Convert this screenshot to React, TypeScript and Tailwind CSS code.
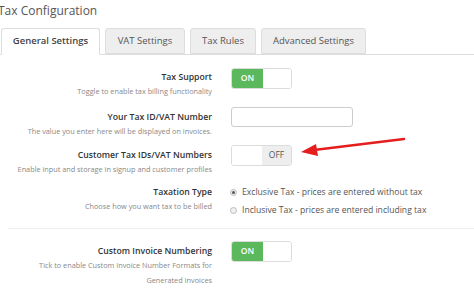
import React from 'react';

const Toggle: React.FC<{ on: boolean }> = ({ on }) => (
  <div className="flex w-[61px] h-[21px] rounded-[3px] border border-[#dcdcdc] overflow-hidden text-[8.5px] font-semibold">
    {on ? (
      <>
        <div className="w-[31px] bg-[#5cb85c] text-white flex items-center justify-center">ON</div>
        <div className="flex-1 bg-white" />
      </>
    ) : (
      <>
        <div className="w-[30px] bg-white" />
        <div className="flex-1 bg-[#eeeeee] text-[#555] flex items-center justify-center font-normal">OFF</div>
      </>
    )}
  </div>
);

const Label: React.FC<{ title: string; desc: React.ReactNode }> = ({ title, desc }) => (
  <div className="w-[212px] shrink-0 text-right">
    <div className="text-[8.7px] leading-[14px] font-semibold text-[#333]">{title}</div>
    <div className="text-[7.3px] leading-[15px] text-[#888]">{desc}</div>
  </div>
);

const Radio: React.FC<{ checked: boolean; text: string }> = ({ checked, text }) => (
  <div className="flex items-center h-[18px]">
    <span className="w-[7px] h-[7px] rounded-full border border-[#bdbdbd] bg-[#eee] flex items-center justify-center">
      {checked && <span className="w-[3px] h-[3px] rounded-full bg-[#555]" />}
    </span>
    <span className="ml-[5px] text-[8.6px] text-[#555]">{text}</span>
  </div>
);

const tabs = [
  { name: 'General Settings', w: 'w-[99px]', active: true },
  { name: 'VAT Settings', w: 'w-[80px]', active: false },
  { name: 'Tax Rules', w: 'w-[66px]', active: false },
  { name: 'Advanced Settings', w: 'w-[105px]', active: false },
];

export default function App() {
  return (
    <div className="relative w-[474px] h-[289px] bg-white overflow-hidden" style={{ fontFamily: '"Open Sans", sans-serif' }}>
      {/* header */}
      <h1 className="ml-[-2px] pt-[1px] text-[12px] leading-[19px] text-[#555] font-normal">Tax Configuration</h1>

      {/* tabs */}
      <div className="mt-[9px] flex items-end border-b border-[#dddddd] pl-[1px] h-[26px]">
        {tabs.map((t) => (
          <div
            key={t.name}
            className={`${t.w} mr-[5px] h-[26px] flex items-center justify-center rounded-t-[3px] border border-[#dddddd] text-[9.5px] ${
              t.active ? 'bg-white border-b-white font-semibold text-[#444] mb-[-1px] h-[27px]' : 'bg-[#eeeeee] text-[#555]'
            }`}
          >
            {t.name}
          </div>
        ))}
      </div>

      {/* row 1 */}
      <div className="mt-[15px] flex items-start">
        <Label title="Tax Support" desc="Toggle to enable tax billing functionality" />
        <div className="ml-[19px] mt-[-2px]"><Toggle on /></div>
      </div>

      {/* row 2 */}
      <div className="mt-[11px] flex items-start">
        <Label title="Your Tax ID/VAT Number" desc="The value you enter here will be displayed on invoices." />
        <div className="ml-[19px] mt-[-3px] w-[122px] h-[20px] rounded-[3px] border border-[#cccccc] bg-white" />
      </div>

      {/* row 3 */}
      <div className="mt-[9px] flex items-start">
        <Label title="Customer Tax IDs/VAT Numbers" desc="Enable input and storage in signup and customer profiles" />
        <div className="ml-[19px] mt-[-3px]"><Toggle on={false} /></div>
      </div>

      {/* row 4 */}
      <div className="mt-[8px] flex items-start">
        <Label title="Taxation Type" desc="Choose how you want tax to be billed" />
        <div className="ml-[18px] mt-[-2px]">
          <Radio checked text="Exclusive Tax - prices are entered without tax" />
          <Radio checked={false} text="Inclusive Tax - prices are entered including tax" />
        </div>
      </div>

      <div className="mt-[9px] ml-[8px] border-t border-[#eeeeee]" />

      {/* row 5 */}
      <div className="mt-[15px] flex items-start">
        <Label
          title="Custom Invoice Numbering"
          desc={<>Tick to enable Custom Invoice Number Formats for<br />Generated Invoices</>}
        />
        <div className="ml-[19px] mt-[-3px]"><Toggle on /></div>
      </div>

      {/* red annotation arrow */}
      <svg className="absolute left-[296px] top-[134px]" width="114" height="24" viewBox="0 0 114 24">
        <line x1="108" y1="5" x2="18" y2="16" stroke="#e51d1d" strokeWidth="2.6" strokeLinecap="round" />
        <polygon points="5,18 20,10 22,22" fill="#e51d1d" />
      </svg>
    </div>
  );
}
